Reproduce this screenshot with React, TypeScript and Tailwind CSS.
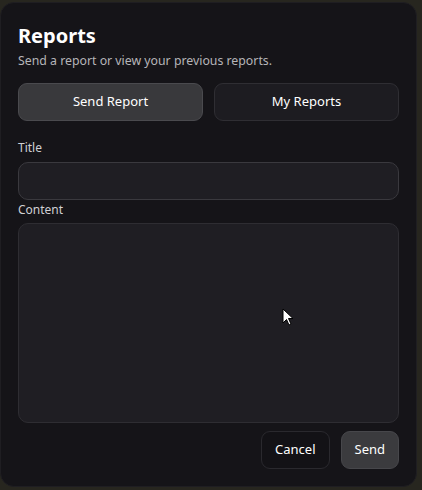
import React from 'react';

const App = () => {
  return (
    <div className="w-[422px] h-[490px] bg-[#27261f] pt-[2px]" style={{ fontFamily: '"Noto Sans", "Open Sans", sans-serif' }}>
      <div className="relative w-[417px] h-[485px] bg-[#151418] rounded-[14px] border border-[#1f1e22] px-[17px] pt-[19px] flex flex-col">
        <h1 className="text-[20px] leading-[28px] font-bold text-white">Reports</h1>
        <p className="text-[12.3px] leading-[20px] text-[#b5b5b8] mt-[1px]">Send a report or view your previous reports.</p>

        <div className="flex gap-[11px] mt-[12px]">
          <button className="flex-1 h-[38px] rounded-[9px] bg-[#39393c] border border-[#4a4a4e] text-[13px] text-white">Send Report</button>
          <button className="flex-1 h-[38px] rounded-[9px] bg-[#1d1c21] border border-[#2f2e33] text-[13px] text-white">My Reports</button>
        </div>

        <label className="text-[12px] leading-[16px] text-[#d0d0d3] mt-[19px]">Title</label>
        <input className="mt-[6px] h-[38px] rounded-[10px] bg-[#1f1e23] border border-[#3a393e] outline-none px-3 text-white text-[13px]" />

        <label className="text-[12px] leading-[16px] text-[#d0d0d3] mt-[2px]">Content</label>
        <textarea className="mt-[5px] h-[200px] rounded-[10px] bg-[#1f1e23] border border-[#2e2d32] outline-none p-3 resize-none text-white text-[13px]" />

        <div className="flex justify-end gap-[11px] mt-[8px]">
          <button className="h-[38px] px-[13px] rounded-[9px] bg-[#131216] border border-[#2a292e] text-[13px] text-white">Cancel</button>
          <button className="h-[38px] px-[13px] rounded-[9px] bg-[#3b3b3e] border border-[#47474b] text-[13px] text-white">Send</button>
        </div>

        <svg className="absolute left-[281px] top-[305px]" width="12" height="18" viewBox="0 0 12 18">
          <path d="M1 1 L1 15 L4.5 11.5 L7 17 L9 16 L6.5 10.5 L11 10.5 Z" fill="#ffffff" stroke="#000000" strokeWidth="1" strokeLinejoin="round" />
        </svg>
      </div>
    </div>
  );
};

export default App;
